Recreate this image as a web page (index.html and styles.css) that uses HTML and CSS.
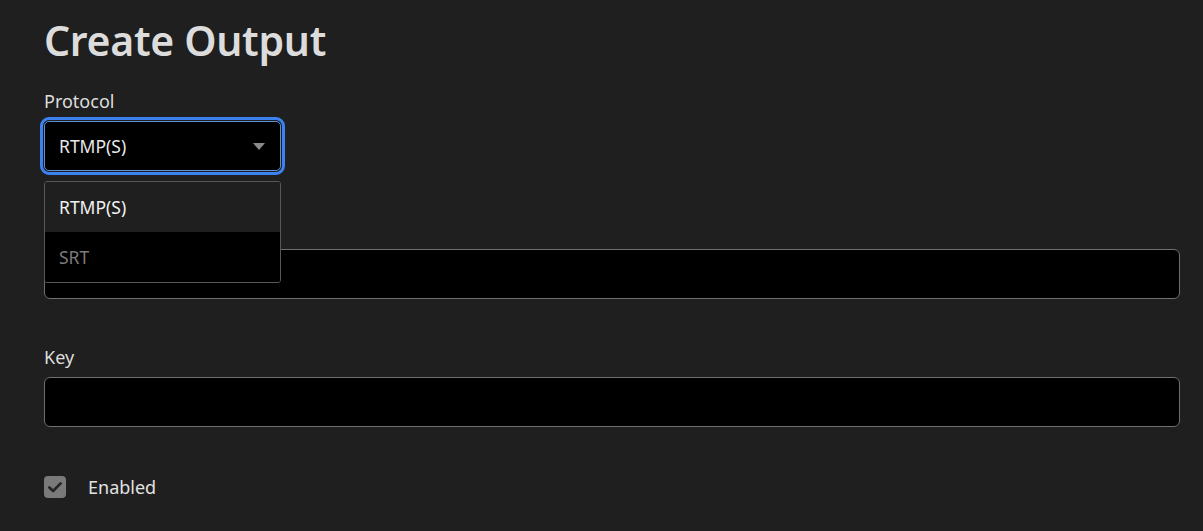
FILE: index.html
```html
<!DOCTYPE html>
<html lang="en">
<head>
<meta charset="utf-8">
<title>Create Output</title>
<link rel="stylesheet" href="styles.css">
</head>
<body>
<main class="page">
  <h1 class="title">Create Output</h1>
  <form class="form">
    <div class="group">
      <label class="label">Protocol</label>
      <div class="select-wrap">
        <div class="select">
          <span class="select-value">RTMP(S)</span>
          <svg class="caret" width="12" height="7" viewBox="0 0 12 7"><path d="M0 0H12L6 7Z" fill="#8a8a8a"/></svg>
        </div>
        <ul class="menu">
          <li class="option active">RTMP(S)</li>
          <li class="option muted">SRT</li>
        </ul>
      </div>
    </div>
    <div class="group">
      <label class="label">URL</label>
      <div class="input"></div>
    </div>
    <div class="group">
      <label class="label">Key</label>
      <div class="input"></div>
    </div>
    <div class="check-row">
      <span class="checkbox">
        <svg width="18" height="18" viewBox="0 0 16 16"><path d="M3 8.4L6.3 11.6L13 4.8" fill="none" stroke="#262626" stroke-width="2.4" stroke-linecap="round" stroke-linejoin="round"/></svg>
      </span>
      <span class="check-label">Enabled</span>
    </div>
  </form>
</main>
</body>
</html>
```

FILE: styles.css
```css
html, body {
  margin: 0;
  padding: 0;
  background: #1f1f1f;
  color: #e2e2e2;
  font-family: "Noto Sans", "Open Sans", sans-serif;
}
.page {
  padding: 12px 23px 0 44px;
}
.title {
  margin: 0;
  font-size: 41px;
  font-weight: 600;
  line-height: 56px;
  color: #dcdcdc;
  letter-spacing: -0.3px;
}
.form {
  margin-top: 21px;
  display: flex;
  flex-direction: column;
}
.group {
  display: flex;
  flex-direction: column;
  margin-bottom: 46px;
}
.label {
  font-size: 18px;
  line-height: 24px;
  color: #dedede;
  margin-bottom: 8px;
}
.select-wrap {
  position: relative;
  width: 237px;
}
.select {
  box-sizing: border-box;
  height: 50px;
  background: #000;
  border: 1px solid #5a8ed6;
  border-radius: 5px;
  outline: 3px solid #3b82f0;
  outline-offset: 1px;
  display: flex;
  align-items: center;
  justify-content: space-between;
  padding: 0 15px 0 14px;
}
.select-value {
  font-size: 17.5px;
  color: #e8e8e8;
}
.menu {
  position: absolute;
  top: 60px;
  left: 0;
  width: 237px;
  box-sizing: border-box;
  margin: 0;
  padding: 0;
  list-style: none;
  border: 1px solid #575757;
  border-radius: 3px;
  overflow: hidden;
  z-index: 2;
}
.option {
  height: 50px;
  display: flex;
  align-items: center;
  padding-left: 14px;
  font-size: 17.5px;
}
.option.active {
  background: #1f1f1f;
  color: #f2f2f2;
}
.option.muted {
  background: #000;
  color: #7a7a7a;
}
.input {
  box-sizing: border-box;
  height: 50px;
  background: #000;
  border: 1px solid #6e6e6e;
  border-radius: 6px;
}
.check-row {
  display: flex;
  align-items: center;
  gap: 22px;
  margin-top: 2px;
}
.checkbox {
  flex: none;
  width: 22px;
  height: 22px;
  border-radius: 4px;
  background: #7a7a7a;
  display: flex;
  align-items: center;
  justify-content: center;
}
.check-label {
  font-size: 18px;
  line-height: 24px;
  color: #e2e2e2;
}
```
